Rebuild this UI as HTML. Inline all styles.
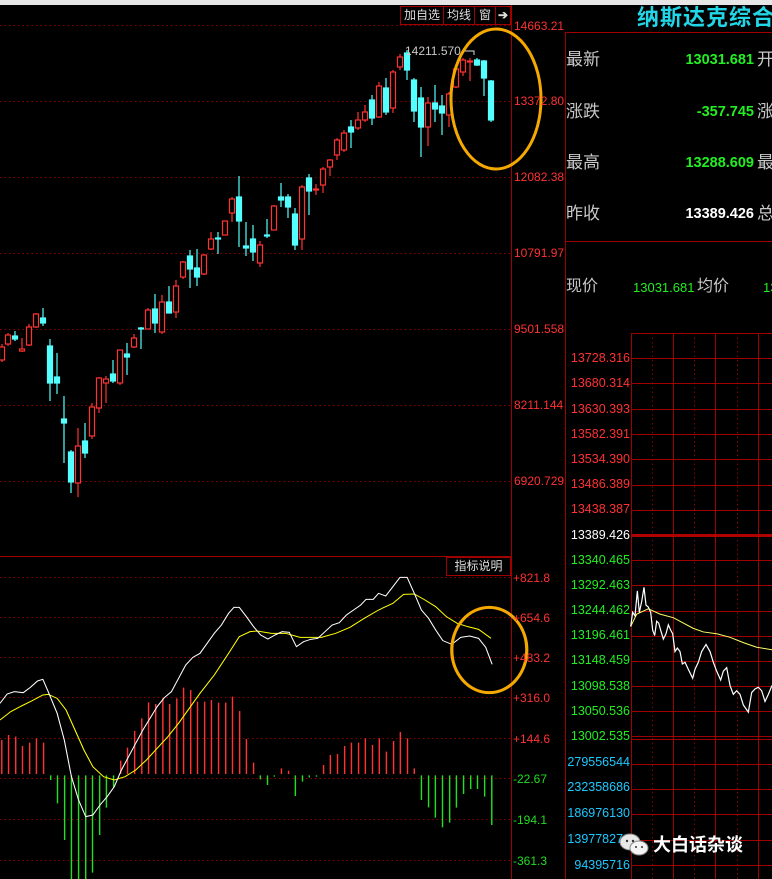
<!DOCTYPE html>
<html><head><meta charset="utf-8"><style>
*{margin:0;padding:0}
body{width:772px;height:879px;background:#000;overflow:hidden;position:relative;font-family:"Liberation Sans","Noto Sans CJK SC",sans-serif}
.t{position:absolute;white-space:nowrap;line-height:1}
.ax{font-size:12px;color:#ff3232}
.ig{font-size:12.5px;text-align:right;width:70px;left:560px}
.lab{font-size:17px;color:#c8c8c8;left:566px}
.val{font-size:14.5px;font-weight:bold;text-align:right;width:120px;left:634px}
</style></head><body>
<div style="position:absolute;left:0;top:0;width:772px;height:5px;background:#e6e6e6"></div>
<svg style="position:absolute;left:0;top:0" width="772" height="879">
<g stroke="#8a0000" stroke-dasharray="1.5,3" stroke-width="1">
<line x1="0" y1="25.5" x2="511" y2="25.5"/><line x1="0" y1="101.5" x2="511" y2="101.5"/><line x1="0" y1="177.5" x2="511" y2="177.5"/><line x1="0" y1="253.5" x2="511" y2="253.5"/><line x1="0" y1="329.5" x2="511" y2="329.5"/><line x1="0" y1="405.5" x2="511" y2="405.5"/><line x1="0" y1="481.5" x2="511" y2="481.5"/>
<line x1="0" y1="577.5" x2="511" y2="577.5"/><line x1="0" y1="617.5" x2="511" y2="617.5"/><line x1="0" y1="657.5" x2="511" y2="657.5"/><line x1="0" y1="697.5" x2="511" y2="697.5"/><line x1="0" y1="738.5" x2="511" y2="738.5"/><line x1="0" y1="778.5" x2="511" y2="778.5"/><line x1="0" y1="819.5" x2="511" y2="819.5"/><line x1="0" y1="860.5" x2="511" y2="860.5"/>
<line x1="652.5" y1="333" x2="652.5" y2="879"/><line x1="694.5" y1="333" x2="694.5" y2="879"/><line x1="737.5" y1="333" x2="737.5" y2="879"/>
</g>
<g stroke="#a00000" stroke-width="1">
<line x1="511.5" y1="5" x2="511.5" y2="879"/>
<line x1="0" y1="556.5" x2="511" y2="556.5"/>
<line x1="565.5" y1="32" x2="565.5" y2="879"/>
<line x1="565" y1="32.5" x2="772" y2="32.5"/>
<line x1="565" y1="241.5" x2="772" y2="241.5"/>
<line x1="631.5" y1="333" x2="631.5" y2="879"/>
<line x1="673.5" y1="333" x2="673.5" y2="879"/><line x1="715.5" y1="333" x2="715.5" y2="879"/><line x1="758.5" y1="333" x2="758.5" y2="879"/>
<line x1="631" y1="333.5" x2="772" y2="333.5"/><line x1="631" y1="358.5" x2="772" y2="358.5"/><line x1="631" y1="383.5" x2="772" y2="383.5"/><line x1="631" y1="409.5" x2="772" y2="409.5"/><line x1="631" y1="434.5" x2="772" y2="434.5"/><line x1="631" y1="459.5" x2="772" y2="459.5"/><line x1="631" y1="485.5" x2="772" y2="485.5"/><line x1="631" y1="510.5" x2="772" y2="510.5"/>
<line x1="631" y1="560.5" x2="772" y2="560.5"/><line x1="631" y1="585.5" x2="772" y2="585.5"/><line x1="631" y1="611.5" x2="772" y2="611.5"/><line x1="631" y1="636.5" x2="772" y2="636.5"/><line x1="631" y1="661.5" x2="772" y2="661.5"/><line x1="631" y1="686.5" x2="772" y2="686.5"/><line x1="631" y1="711.5" x2="772" y2="711.5"/><line x1="631" y1="736.5" x2="772" y2="736.5"/><line x1="631" y1="739.5" x2="772" y2="739.5"/><line x1="631" y1="764.5" x2="772" y2="764.5"/><line x1="631" y1="789.5" x2="772" y2="789.5"/><line x1="631" y1="814.5" x2="772" y2="814.5"/><line x1="631" y1="840.5" x2="772" y2="840.5"/><line x1="631" y1="865.5" x2="772" y2="865.5"/>
</g>
<line x1="631" y1="535.5" x2="772" y2="535.5" stroke="#b00000" stroke-width="3"/>
<g stroke-width="1.2">
<g stroke="#ff3232" fill="#000">
<line x1="2" y1="344" x2="2" y2="362"/><rect x="-0.5" y="347" width="5" height="13"/>
<line x1="8" y1="333" x2="8" y2="346"/><rect x="5.5" y="335" width="5" height="9"/>
<line x1="22" y1="338" x2="22" y2="352"/><rect x="19.5" y="349" width="5" height="2"/>
<line x1="29" y1="324" x2="29" y2="346"/><rect x="26.5" y="327" width="5" height="18"/>
<line x1="36" y1="313" x2="36" y2="328"/><rect x="33.5" y="314" width="5" height="13"/>
<line x1="78" y1="428" x2="78" y2="497"/><rect x="75.5" y="446" width="5" height="37"/>
<line x1="92" y1="403" x2="92" y2="439"/><rect x="89.5" y="407" width="5" height="29"/>
<line x1="99" y1="377" x2="99" y2="413"/><rect x="96.5" y="378" width="5" height="30"/>
<line x1="106" y1="376" x2="106" y2="403"/><rect x="103.5" y="379" width="5" height="4"/>
<line x1="120" y1="350" x2="120" y2="385"/><rect x="117.5" y="350" width="5" height="33"/>
<line x1="134" y1="334" x2="134" y2="348"/><rect x="131.5" y="338" width="5" height="9"/>
<line x1="148" y1="308" x2="148" y2="329"/><rect x="145.5" y="310" width="5" height="19"/>
<line x1="162" y1="295" x2="162" y2="334"/><rect x="159.5" y="302" width="5" height="30"/>
<line x1="176" y1="280" x2="176" y2="318"/><rect x="173.5" y="286" width="5" height="26"/>
<line x1="183" y1="261" x2="183" y2="279"/><rect x="180.5" y="262" width="5" height="15"/>
<line x1="204" y1="254" x2="204" y2="275"/><rect x="201.5" y="255" width="5" height="19"/>
<line x1="211" y1="232" x2="211" y2="250"/><rect x="208.5" y="239" width="5" height="10"/>
<line x1="225" y1="221" x2="225" y2="235"/><rect x="222.5" y="221" width="5" height="14"/>
<line x1="232" y1="197" x2="232" y2="222"/><rect x="229.5" y="199" width="5" height="14"/>
<line x1="260" y1="241" x2="260" y2="267"/><rect x="257.5" y="245" width="5" height="18"/>
<line x1="274" y1="205" x2="274" y2="230"/><rect x="271.5" y="206" width="5" height="24"/>
<line x1="302" y1="185" x2="302" y2="250"/><rect x="299.5" y="187" width="5" height="52"/>
<line x1="316" y1="184" x2="316" y2="195"/><rect x="313.5" y="189" width="5" height="1"/>
<line x1="323" y1="167" x2="323" y2="193"/><rect x="320.5" y="169" width="5" height="16"/>
<line x1="330" y1="159" x2="330" y2="176"/><rect x="327.5" y="160" width="5" height="7"/>
<line x1="337" y1="138" x2="337" y2="160"/><rect x="334.5" y="140" width="5" height="15"/>
<line x1="344" y1="130" x2="344" y2="152"/><rect x="341.5" y="133" width="5" height="17"/>
<line x1="358" y1="112" x2="358" y2="130"/><rect x="355.5" y="120" width="5" height="8"/>
<line x1="365" y1="105" x2="365" y2="122"/><rect x="362.5" y="112" width="5" height="8"/>
<line x1="379" y1="82" x2="379" y2="118"/><rect x="376.5" y="86" width="5" height="31"/>
<line x1="393" y1="70" x2="393" y2="113"/><rect x="390.5" y="72" width="5" height="36"/>
<line x1="400" y1="54" x2="400" y2="70"/><rect x="397.5" y="57" width="5" height="10"/>
<line x1="428" y1="97" x2="428" y2="146"/><rect x="425.5" y="103" width="5" height="24"/>
<line x1="449" y1="92" x2="449" y2="127"/><rect x="446.5" y="94" width="5" height="21"/>
<line x1="456" y1="67" x2="456" y2="88"/><rect x="453.5" y="69" width="5" height="18"/>
<line x1="463" y1="58" x2="463" y2="76"/><rect x="460.5" y="60" width="5" height="12"/>
<line x1="470" y1="58" x2="470" y2="81"/><rect x="467.5" y="61" width="5" height="1"/>
</g>
<g stroke="#54ffff" fill="#54ffff">
<line x1="15" y1="331" x2="15" y2="341"/><rect x="12.5" y="336" width="5" height="3"/>
<line x1="43" y1="308" x2="43" y2="326"/><rect x="40.5" y="318" width="5" height="5"/>
<line x1="50" y1="339" x2="50" y2="401"/><rect x="47.5" y="346" width="5" height="37"/>
<line x1="57" y1="353" x2="57" y2="394"/><rect x="54.5" y="377" width="5" height="6"/>
<line x1="64" y1="396" x2="64" y2="463"/><rect x="61.5" y="419" width="5" height="4"/>
<line x1="71" y1="450" x2="71" y2="493"/><rect x="68.5" y="452" width="5" height="30"/>
<line x1="85" y1="423" x2="85" y2="458"/><rect x="82.5" y="441" width="5" height="12"/>
<line x1="113" y1="360" x2="113" y2="383"/><rect x="110.5" y="374" width="5" height="7"/>
<line x1="127" y1="343" x2="127" y2="375"/><rect x="124.5" y="354" width="5" height="3"/>
<line x1="141" y1="327" x2="141" y2="349"/><rect x="138.5" y="328" width="5" height="1"/>
<line x1="155" y1="294" x2="155" y2="333"/><rect x="152.5" y="309" width="5" height="14"/>
<line x1="169" y1="286" x2="169" y2="313"/><rect x="166.5" y="302" width="5" height="11"/>
<line x1="190" y1="250" x2="190" y2="288"/><rect x="187.5" y="256" width="5" height="13"/>
<line x1="197" y1="249" x2="197" y2="286"/><rect x="194.5" y="268" width="5" height="9"/>
<line x1="218" y1="232" x2="218" y2="254"/><rect x="215.5" y="238" width="5" height="1"/>
<line x1="239" y1="176" x2="239" y2="247"/><rect x="236.5" y="197" width="5" height="24"/>
<line x1="246" y1="222" x2="246" y2="256"/><rect x="243.5" y="246" width="5" height="2"/>
<line x1="253" y1="225" x2="253" y2="261"/><rect x="250.5" y="239" width="5" height="13"/>
<line x1="267" y1="219" x2="267" y2="238"/><rect x="264.5" y="235" width="5" height="1"/>
<line x1="281" y1="183" x2="281" y2="207"/><rect x="278.5" y="197" width="5" height="3"/>
<line x1="288" y1="194" x2="288" y2="218"/><rect x="285.5" y="197" width="5" height="10"/>
<line x1="295" y1="208" x2="295" y2="250"/><rect x="292.5" y="214" width="5" height="31"/>
<line x1="309" y1="174" x2="309" y2="215"/><rect x="306.5" y="178" width="5" height="13"/>
<line x1="351" y1="120" x2="351" y2="148"/><rect x="348.5" y="127" width="5" height="5"/>
<line x1="372" y1="95" x2="372" y2="125"/><rect x="369.5" y="100" width="5" height="18"/>
<line x1="386" y1="78" x2="386" y2="115"/><rect x="383.5" y="88" width="5" height="24"/>
<line x1="407" y1="50" x2="407" y2="80"/><rect x="404.5" y="53" width="5" height="17"/>
<line x1="414" y1="78" x2="414" y2="122"/><rect x="411.5" y="80" width="5" height="31"/>
<line x1="421" y1="87" x2="421" y2="157"/><rect x="418.5" y="98" width="5" height="29"/>
<line x1="435" y1="85" x2="435" y2="122"/><rect x="432.5" y="103" width="5" height="6"/>
<line x1="442" y1="95" x2="442" y2="135"/><rect x="439.5" y="106" width="5" height="7"/>
<line x1="477" y1="58" x2="477" y2="66"/><rect x="474.5" y="60" width="5" height="5"/>
<line x1="484" y1="60" x2="484" y2="96"/><rect x="481.5" y="61" width="5" height="17"/>
<line x1="491" y1="80" x2="491" y2="122"/><rect x="488.5" y="81" width="5" height="39"/>
</g></g>
<path d="M464 51 H474 V55" stroke="#ddd" fill="none" stroke-width="1"/>
<ellipse cx="496" cy="99" rx="45" ry="70" fill="none" stroke="#f5a800" stroke-width="3"/>
</svg>
<svg style="position:absolute;left:0;top:550px" width="560" height="329" viewBox="0 0 1568 987" preserveAspectRatio="none">
<g stroke="#ff3232" stroke-width="4">
<path d="M5 672V570M24 672V555M44 672V560M63 672V588M83 672V578M102 672V565M122 672V578M338 672V632M357 672V593M377 672V543M397 672V505M416 672V457M436 672V462M456 672V445M475 672V462M495 672V445M514 672V413M534 672V420M553 672V455M573 672V455M592 672V450M612 672V458M632 672V458M651 672V440M671 672V483M690 672V567M710 672V638M788 672V655M808 672V662M906 672V645M925 672V615M945 672V612M965 672V588M984 672V578M1004 672V578M1023 672V565M1043 672V585M1062 672V565M1082 672V605M1102 672V573M1121 672V546M1141 672V565M1160 672V655"/>
</g>
<g stroke="#22dd22" stroke-width="4">
<path d="M142 676V690M161 676V760M181 676V870M200 676V987M220 676V987M240 676V987M259 676V968M279 676V855M298 676V773M318 676V712M729 676V688M749 676V705M768 676V680M827 676V738M847 676V695M866 676V682M886 676V680M1180 676V750M1200 676V772M1219 676V803M1239 676V832M1259 676V818M1278 676V773M1298 676V732M1318 676V717M1337 676V717M1357 676V740M1377 676V825"/>
</g>
<polyline fill="none" stroke="#ffff00" stroke-width="3" points="0,510 30,485 60,468 90,452 120,435 135,433 160,445 185,480 210,540 235,600 260,650 290,680 320,690 350,680 380,660 410,630 440,595 470,560 500,520 530,475 560,430 600,375 640,310 670,260 700,245 720,243 760,250 800,250 840,262 900,262 940,250 980,232 1020,205 1060,180 1100,160 1130,133 1160,132 1190,150 1220,170 1250,200 1280,220 1310,230 1340,238 1375,265"/>
<polyline fill="none" stroke="#ffffff" stroke-width="3" points="0,460 20,432 40,425 65,428 85,412 105,393 120,388 135,425 160,490 180,570 200,680 220,750 240,800 260,795 280,765 300,740 320,710 340,660 360,620 380,580 400,540 420,505 440,470 460,443 480,425 500,385 520,345 540,322 560,310 580,280 600,250 620,225 640,190 655,172 670,172 690,200 710,230 730,255 750,267 770,255 790,245 810,247 830,290 850,275 870,268 890,265 910,245 930,225 950,218 970,195 990,180 1010,165 1025,148 1045,148 1060,130 1080,138 1100,110 1120,82 1140,82 1160,130 1180,180 1200,205 1220,240 1240,272 1265,283 1290,262 1315,258 1340,265 1360,292 1378,343"/>
<ellipse cx="1370" cy="300" rx="105" ry="128" fill="none" stroke="#f5a800" stroke-width="9"/>
</svg>
<svg style="position:absolute;left:560px;top:320px" width="212" height="559" viewBox="0 0 636 1568" preserveAspectRatio="none">
<polyline fill="none" stroke="#ffff66" stroke-width="1" vector-effect="non-scaling-stroke" points="212,860 230,825 265,810 300,825 340,835 370,850 400,865 430,875 470,880 510,890 550,905 590,918 636,925"/>
<polyline fill="none" stroke="#fff" stroke-width="1.2" vector-effect="non-scaling-stroke" points="212,860 218,820 225,830 232,760 238,820 245,790 252,750 258,800 265,805 272,820 278,870 284,885 290,845 296,850 302,870 310,895 318,880 325,855 332,870 338,880 345,930 352,920 360,930 367,965 375,960 385,980 398,1005 405,980 415,960 425,930 438,910 450,930 460,960 470,985 482,1010 490,985 500,975 510,1025 520,1050 530,1040 540,1050 550,1080 565,1100 575,1045 585,1035 595,1030 605,1040 615,1070 625,1050 636,1025"/>
</svg>
<div style="position:absolute;left:400px;top:6px;width:111px;height:19px;border:1px solid #a00000;box-sizing:border-box;display:flex;font-size:12px;color:#ddd;line-height:17px">
<span style="width:42px;border-right:1px solid #a00000;text-align:center">加自选</span><span style="width:30px;border-right:1px solid #a00000;text-align:center">均线</span><span style="width:20px;border-right:1px solid #a00000;text-align:center">窗</span><span style="flex:1;text-align:center;font-weight:bold">➔</span></div>
<div class="t" style="left:637px;top:7px;font-size:22px;font-weight:bold;color:#22d6e8;letter-spacing:1px">纳斯达克综合</div>
<div class="t" style="left:405px;top:45px;font-size:12px;color:#c8c8c8">14211.570</div>
<div class="t ax" style="left:514px;top:20px">14663.21</div>
<div class="t ax" style="left:514px;top:95px">13372.80</div>
<div class="t ax" style="left:514px;top:171px">12082.38</div>
<div class="t ax" style="left:514px;top:247px">10791.97</div>
<div class="t ax" style="left:514px;top:323px">9501.558</div>
<div class="t ax" style="left:514px;top:399px">8211.144</div>
<div class="t ax" style="left:514px;top:475px">6920.729</div>
<div class="t" style="left:446px;top:557px;width:65px;height:19px;border:1px solid #a00000;box-sizing:border-box;font-size:12px;color:#ddd;text-align:center;line-height:17px">指标说明</div>
<div class="t ax" style="left:513px;top:572px">+821.8</div>
<div class="t ax" style="left:513px;top:612px">+654.6</div>
<div class="t ax" style="left:513px;top:652px">+483.2</div>
<div class="t ax" style="left:513px;top:692px">+316.0</div>
<div class="t ax" style="left:513px;top:733px">+144.6</div>
<div class="t ax" style="left:513px;top:773px;color:#22dd22">-22.67</div>
<div class="t ax" style="left:513px;top:814px;color:#22dd22">-194.1</div>
<div class="t ax" style="left:513px;top:855px;color:#22dd22">-361.3</div>
<div class="t lab" style="top:51px">最新</div><div class="t val" style="top:53px;color:#22ee22">13031.681</div><div class="t lab" style="left:757px;top:51px">开</div>
<div class="t lab" style="top:103px">涨跌</div><div class="t val" style="top:105px;color:#22ee22">-357.745</div><div class="t lab" style="left:757px;top:103px">涨</div>
<div class="t lab" style="top:154px">最高</div><div class="t val" style="top:156px;color:#22ee22">13288.609</div><div class="t lab" style="left:757px;top:154px">最</div>
<div class="t lab" style="top:205px">昨收</div><div class="t val" style="top:207px;color:#fff">13389.426</div><div class="t lab" style="left:757px;top:205px">总</div>
<div class="t lab" style="top:279px;font-size:16px">现价</div>
<div class="t" style="left:633px;top:281px;font-size:13px;color:#22ee22">13031.681</div>
<div class="t lab" style="left:697px;top:279px;font-size:16px">均价</div>
<div class="t" style="left:763px;top:281px;font-size:13px;color:#22ee22">13</div>
<div class="t ig" style="top:352px;color:#ff3232">13728.316</div>
<div class="t ig" style="top:377px;color:#ff3232">13680.314</div>
<div class="t ig" style="top:403px;color:#ff3232">13630.393</div>
<div class="t ig" style="top:428px;color:#ff3232">13582.391</div>
<div class="t ig" style="top:453px;color:#ff3232">13534.390</div>
<div class="t ig" style="top:478px;color:#ff3232">13486.389</div>
<div class="t ig" style="top:503px;color:#ff3232">13438.387</div>
<div class="t ig" style="top:529px;color:#fff">13389.426</div>
<div class="t ig" style="top:554px;color:#22ee22">13340.465</div>
<div class="t ig" style="top:579px;color:#22ee22">13292.463</div>
<div class="t ig" style="top:604px;color:#22ee22">13244.462</div>
<div class="t ig" style="top:629px;color:#22ee22">13196.461</div>
<div class="t ig" style="top:654px;color:#22ee22">13148.459</div>
<div class="t ig" style="top:680px;color:#22ee22">13098.538</div>
<div class="t ig" style="top:705px;color:#22ee22">13050.536</div>
<div class="t ig" style="top:730px;color:#22ee22">13002.535</div>
<div class="t ig" style="top:756px;color:#1ec8ff">279556544</div>
<div class="t ig" style="top:781px;color:#1ec8ff">232358686</div>
<div class="t ig" style="top:807px;color:#1ec8ff">186976130</div>
<div class="t ig" style="top:833px;color:#1ec8ff">139778272</div>
<div class="t ig" style="top:859px;color:#1ec8ff">94395716</div>
<svg style="position:absolute;left:618px;top:832px" width="32" height="26">
<ellipse cx="12" cy="10" rx="10" ry="8" fill="#e8e8e8" stroke="#888"/>
<ellipse cx="21" cy="16" rx="9" ry="7" fill="#f4f4f4" stroke="#888"/>
<circle cx="9" cy="9" r="1.2" fill="#333"/><circle cx="15" cy="9" r="1.2" fill="#333"/>
<circle cx="18" cy="15" r="1" fill="#333"/><circle cx="24" cy="15" r="1" fill="#333"/></svg>
<div class="t" style="left:653px;top:836px;font-size:18px;font-weight:bold;color:#fff">大白话杂谈</div>
</body></html>
